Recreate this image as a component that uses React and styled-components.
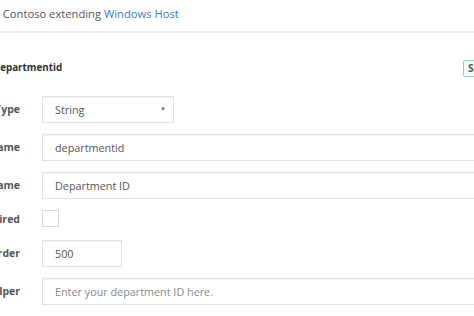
import React from "react";
import styled, { createGlobalStyle } from "styled-components";

const GlobalStyle = createGlobalStyle`
  html, body {
    margin: 0;
    padding: 0;
    background: #fff;
    overflow: hidden;
  }
  body {
    font-family: "Open Sans", "Noto Sans", sans-serif;
    color: #555;
  }
`;

const fields = [
  { label: "Type", kind: "select", value: "String" },
  { label: "Name", kind: "text", value: "departmentid" },
  { label: "Display Name", kind: "text", value: "Department ID" },
  { label: "Required", kind: "check" },
  { label: "Order", kind: "text", value: "500", narrow: true },
  { label: "Helper", kind: "text", placeholder: "Enter your department ID here." },
];

function App() {
  return (
    <Page>
      <GlobalStyle />
      <Header>
        <span>Extension: Contoso extending </span>
        <HostLink>Windows Host</HostLink>
      </Header>
      <Divider />
      <Form>
        <TitleRow>
          <Title>departmentid</Title>
          <SaveButton>Save</SaveButton>
        </TitleRow>
        {fields.map((f) => (
          <Row key={f.label} $check={f.kind === "check"}>
            <Label>{f.label}</Label>
            {f.kind === "select" && (
              <Select>
                <span>{f.value}</span>
                <Caret>▼</Caret>
              </Select>
            )}
            {f.kind === "text" && (
              <Input $narrow={f.narrow} $placeholder={!f.value}>
                {f.value || f.placeholder}
              </Input>
            )}
            {f.kind === "check" && <Checkbox />}
          </Row>
        ))}
      </Form>
    </Page>
  );
}

export default App;

const Page = styled.div`
  width: 474px;
  height: 316px;
  overflow: hidden;
`;

const Header = styled.div`
  margin-left: -54px;
  padding-top: 5px;
  height: 26px;
  font-size: 11.2px;
  line-height: 18px;
  color: #555;
  white-space: nowrap;
`;

const HostLink = styled.span`
  color: #3a7bbf;
`;

const Divider = styled.div`
  height: 2px;
  background: #ececec;
`;

const Form = styled.div`
  margin-left: -62px;
  width: 562px;
`;

const TitleRow = styled.div`
  display: flex;
  justify-content: space-between;
  align-items: center;
  height: 32px;
  margin-top: 18px;
  margin-bottom: 13px;
`;

const Title = styled.div`
  font-size: 9.8px;
  font-weight: 700;
  color: #333;
  padding-left: 56px;
`;

const SaveButton = styled.div`
  width: 40px;
  height: 17px;
  box-sizing: border-box;
  border: 1px solid #8fd6c2;
  border-radius: 2px;
  background: #f2fbf8;
  color: #3f5f55;
  font-size: 10px;
  font-weight: 700;
  line-height: 15px;
  padding-left: 4px;
  margin-top: 2px;
  margin-right: -3px;
  white-space: nowrap;
`;

const Row = styled.div`
  display: flex;
  align-items: center;
  height: ${(p) => (p.$check ? "17px" : "26px")};
  margin-bottom: ${(p) => (p.$check ? "13px" : "12px")};
`;

const Label = styled.div`
  width: 82px;
  flex-shrink: 0;
  text-align: right;
  font-size: 10.5px;
  font-weight: 700;
  color: #555;
  white-space: nowrap;
  margin-right: 22px;
`;

const Field = styled.div`
  box-sizing: border-box;
  height: 27px;
  border: 1px solid #e2e2e2;
  box-shadow: inset 0 1px 1px rgba(0, 0, 0, 0.04);
  display: flex;
  align-items: center;
  padding: 0 12px;
  font-size: 10.8px;
  color: #555;
  background: #fff;
`;

const Select = styled(Field)`
  width: 132px;
  justify-content: space-between;
  padding-right: 7px;
`;

const Caret = styled.span`
  font-size: 6px;
  color: #666;
`;

const Input = styled(Field)`
  flex: ${(p) => (p.$narrow ? "none" : "1")};
  width: ${(p) => (p.$narrow ? "80px" : "auto")};
  color: ${(p) => (p.$placeholder ? "#8a8a8a" : "#555")};
`;

const Checkbox = styled.div`
  width: 17px;
  height: 17px;
  box-sizing: border-box;
  border: 1px solid #d8d8d8;
  background: #fff;
`;
